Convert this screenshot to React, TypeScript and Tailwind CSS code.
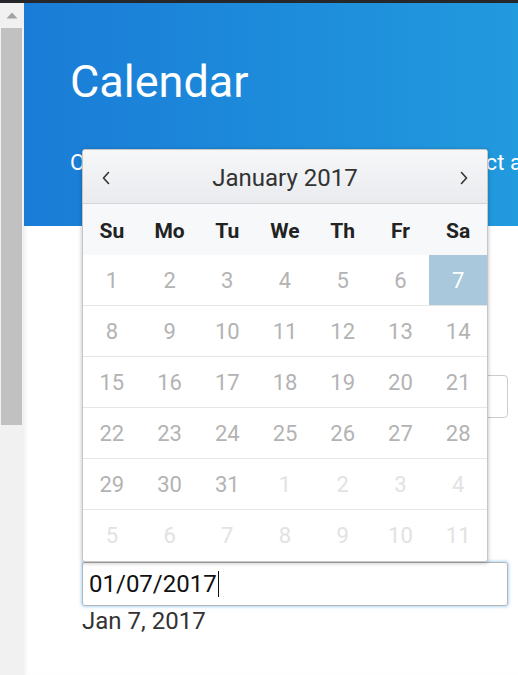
import React from "react";

type Day = { n: number; muted?: boolean; selected?: boolean };

const weekdays = ["Su", "Mo", "Tu", "We", "Th", "Fr", "Sa"];

function buildWeeks(): Day[][] {
  const days: Day[] = [];
  for (let i = 1; i <= 31; i++) days.push({ n: i, selected: i === 7 });
  for (let i = 1; i <= 11; i++) days.push({ n: i, muted: true });
  const weeks: Day[][] = [];
  for (let w = 0; w < 6; w++) weeks.push(days.slice(w * 7, w * 7 + 7));
  return weeks;
}

function Chevron({ dir }: { dir: "left" | "right" }) {
  return (
    <svg width="10" height="14" viewBox="0 0 10 14" fill="none">
      <polyline
        points={dir === "left" ? "7.5,1.5 2.5,7 7.5,12.5" : "2.5,1.5 7.5,7 2.5,12.5"}
        stroke="#333"
        strokeWidth="1.6"
        strokeLinecap="round"
        strokeLinejoin="round"
      />
    </svg>
  );
}

function DatePopup() {
  const weeks = buildWeeks();
  return (
    <div className="absolute left-[58px] top-[146px] w-[406px] overflow-hidden rounded-[3px] border border-[#c6c6c6] bg-white shadow-[0_1px_4px_rgba(0,0,0,0.28)]">
      <div className="flex h-[54px] items-center justify-between border-b border-[#d3d5d9] bg-gradient-to-b from-[#f6f7f9] to-[#eaebee] px-[18px] pt-[2px]">
        <Chevron dir="left" />
        <span className="text-[24px] leading-none text-[#333]">January 2017</span>
        <Chevron dir="right" />
      </div>
      <div className="grid h-[51px] grid-cols-7 items-center bg-[#f7f8fa] pt-[3px]">
        {weekdays.map((d) => (
          <span key={d} className="text-center text-[21px] font-bold leading-none text-[#222]">
            {d}
          </span>
        ))}
      </div>
      {weeks.map((week, wi) => (
        <div
          key={wi}
          className={`grid h-[51px] grid-cols-7 ${wi < 5 ? "border-b border-[#e6e6e6]" : ""}`}
        >
          {week.map((day, di) => (
            <div
              key={di}
              className={`flex items-center justify-center text-[22px] ${
                day.selected
                  ? "bg-[#a9c8dc] text-white"
                  : day.muted
                  ? "text-[#e2e2e2]"
                  : "text-[#b3b3b3]"
              }`}
            >
              {day.n}
            </div>
          ))}
        </div>
      ))}
    </div>
  );
}

function Scrollbar() {
  return (
    <div className="flex w-[24px] shrink-0 flex-col bg-[#f1f1f1]">
      <div className="flex h-[25px] items-center justify-center">
        <svg width="12" height="7" viewBox="0 0 12 7">
          <polygon points="6,0.5 11.5,6.5 0.5,6.5" fill="#a3a3a3" />
        </svg>
      </div>
      <div className="ml-[1px] h-[397px] w-[21px] bg-[#c1c1c1]" />
    </div>
  );
}

export default function App() {
  return (
    <div
      className="flex h-[675px] w-[518px] flex-col overflow-hidden bg-white"
      style={{ fontFamily: "Roboto, 'Liberation Sans', sans-serif" }}
    >
      <div className="h-[3px] shrink-0 bg-[#25272b]" />
      <div className="flex flex-1">
        <Scrollbar />
        <div className="relative flex-1 overflow-hidden shadow-[inset_4px_0_4px_-3px_rgba(0,0,0,0.08)]">
          <div className="h-[223px] bg-gradient-to-r from-[#1a7cd7] to-[#229ade] pl-[46px] pt-[56px] text-white">
            <h1 className="text-[45px] leading-none">Calendar</h1>
            <p className="mt-[48px] whitespace-nowrap text-[22px] leading-none tracking-[0.15px]">
              Open this date picker below, and then select a date.
            </p>
          </div>
          <div className="pl-[58px] pr-[10px]">
            <div className="mt-[149px] h-[43px] rounded-[4px] border border-[#cccccc]" />
            <div className="mt-[144px] flex h-[44px] items-center rounded-[3px] border border-[#b5b5b5] px-[6px] shadow-[0_0_3px_1px_rgba(110,180,240,0.55)]">
              <span className="text-[24px] leading-none text-[#111]">01/07/2017</span>
              <span className="ml-[1px] h-[26px] w-[1px] bg-[#111]" />
            </div>
            <div className="mt-[1px] text-[24px] leading-[28px] text-[#333]">Jan 7, 2017</div>
          </div>
          <DatePopup />
        </div>
      </div>
    </div>
  );
}
